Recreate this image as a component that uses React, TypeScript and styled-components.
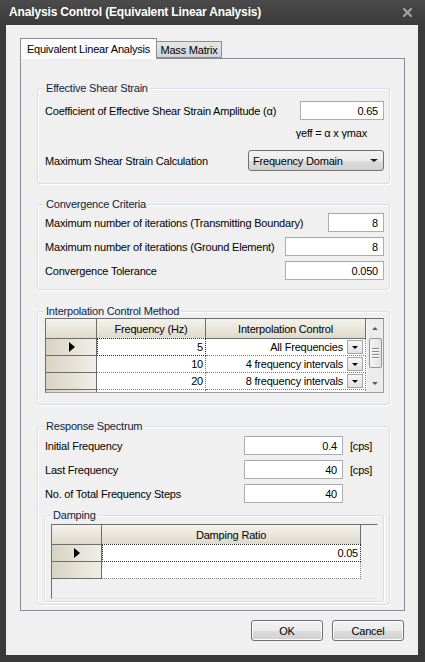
import React from "react";
import styled, { createGlobalStyle, css } from "styled-components";

const GlobalStyle = createGlobalStyle`
  html, body {
    margin: 0;
    padding: 0;
    background: #3b3b3b;
  }
  body {
    font-family: "Liberation Sans", Arial, sans-serif;
    font-size: 11px;
    letter-spacing: -0.2px;
    color: #000;
  }
  * {
    box-sizing: border-box;
  }
`;

const Window = styled.div`
  width: 425px;
  height: 662px;
  display: flex;
  flex-direction: column;
  padding: 0 7px 7px 6px;
  background: linear-gradient(#4b4b4b, #3a3a3a 26px, #3a3a3a);
`;

const TitleBar = styled.div`
  height: 25px;
  flex: none;
  display: flex;
  align-items: center;
  justify-content: space-between;
  padding: 0 6px 1px 3px;
  color: #fff;
  font-weight: bold;
  font-size: 12px;
  letter-spacing: -0.15px;
`;

const Client = styled.div`
  flex: 1;
  display: flex;
  flex-direction: column;
  background: #f0f0f0;
  padding: 13px 13px 0 14px;
`;

const TabStrip = styled.div`
  height: 21px;
  display: flex;
  align-items: flex-end;
  margin-bottom: -1px;
  position: relative;
  z-index: 1;
`;

const Tab = styled.div<{ $active?: boolean }>`
  display: flex;
  align-items: center;
  justify-content: center;
  border: 1px solid #898c95;
  border-bottom: none;
  ${(p) =>
    p.$active
      ? css`
          width: 137px;
          height: 21px;
          background: #fcfcfc;
          padding-bottom: 1px;
        `
      : css`
          width: 66px;
          height: 17px;
          margin-left: -1px;
          margin-bottom: 1px;
          background: linear-gradient(#e6e6e6, #d4d4d4);
          border-bottom: 1px solid #898c95;
        `}
`;

const Panel = styled.div`
  height: 553px;
  border: 1px solid #898c95;
  background: #f0f0f0;
  padding: 29px 14px 0 16px;
  display: flex;
  flex-direction: column;
`;

const Group = styled.div<{ $mt?: number }>`
  position: relative;
  border: 1px solid #d5dfe5;
  border-radius: 3px;
  box-shadow: inset 1px 1px 0 #fff, 1px 1px 0 #fff;
  margin-top: ${(p) => p.$mt ?? 0}px;
  padding: 0 5px 0 7px;
`;

const Legend = styled.span`
  position: absolute;
  top: -7px;
  left: 6px;
  padding: 0 2px;
  line-height: 13px;
  background: #f0f0f0;
  color: #10233f;
`;

const Row = styled.div<{ $h?: number; $mt?: number }>`
  display: flex;
  align-items: center;
  justify-content: space-between;
  height: ${(p) => p.$h ?? 19}px;
  margin-top: ${(p) => p.$mt ?? 0}px;
`;

const Label = styled.span`
  white-space: nowrap;
`;

const Field = styled.div<{ $w: number }>`
  width: ${(p) => p.$w}px;
  height: 19px;
  background: #fff;
  border: 1px solid #abadb3;
  border-top-color: #a3a6ae;
  display: flex;
  align-items: center;
  justify-content: flex-end;
  padding-right: 5px;
`;

const Formula = styled.div`
  height: 15px;
  margin-top: 5px;
  padding-right: 17px;
  display: flex;
  align-items: center;
  justify-content: flex-end;
`;

const Combo = styled.div`
  width: 136px;
  height: 21px;
  border: 1px solid #707070;
  border-radius: 3px;
  background: linear-gradient(#f2f2f2 0%, #ebebeb 50%, #dddddd 50%, #cfcfcf 100%);
  display: flex;
  align-items: center;
  justify-content: space-between;
  padding: 0 5px 0 4px;
`;

const Arrow = styled.span<{ $size?: number; $color?: string }>`
  width: 0;
  height: 0;
  border-left: ${(p) => p.$size ?? 4}px solid transparent;
  border-right: ${(p) => p.$size ?? 4}px solid transparent;
  border-top: ${(p) => (p.$size ?? 4) - 0.5}px solid ${(p) => p.$color ?? "#1b1b1b"};
`;

const UpArrow = styled.span`
  width: 0;
  height: 0;
  border-left: 3.5px solid transparent;
  border-right: 3.5px solid transparent;
  border-bottom: 3.5px solid #5c5c5c;
`;

const InputWithUnit = styled.div`
  display: flex;
  align-items: center;
`;

const Unit = styled.span`
  width: 41px;
  padding-left: 7px;
`;

/* data grids */

const GridFrame = styled.div<{ $w: number; $open?: boolean }>`
  width: ${(p) => p.$w}px;
  height: 75px;
  border: 1px solid #9c9c9c;
  border-top-color: #6d6d6d;
  border-left-color: #6d6d6d;
  ${(p) =>
    p.$open &&
    css`
      border-right-color: #f0f0f0;
      border-bottom-color: #e3e3e3;
    `}
  background: #f0f0f0;
  display: flex;
  overflow: hidden;
`;

const GridBody = styled.div`
  flex: 1;
  display: flex;
  flex-direction: column;
`;

const GridRow = styled.div<{ $header?: boolean }>`
  display: flex;
  flex: none;
  height: ${(p) => (p.$header ? 20 : 17)}px;
`;

const RowHead = styled.div<{ $w: number; $corner?: boolean }>`
  width: ${(p) => p.$w}px;
  flex: none;
  background: ${(p) =>
    p.$corner
      ? "linear-gradient(#f3f2ec, #dedacb)"
      : "linear-gradient(to right, #d7d3c3, #f0eee7)"};
  border-right: 1px solid #6d6d6d;
  border-bottom: 1px solid #6d6d6d;
  display: flex;
  align-items: center;
  justify-content: center;
`;

const ColHead = styled.div<{ $w: number }>`
  width: ${(p) => p.$w}px;
  flex: none;
  background: linear-gradient(#f3f2ec, #dedacb);
  border-right: 1px solid #6d6d6d;
  border-bottom: 1px solid #6d6d6d;
  display: flex;
  align-items: center;
  justify-content: center;
  padding-top: 1px;
`;

const Marker = styled.span`
  width: 0;
  height: 0;
  border-top: 5px solid transparent;
  border-bottom: 5px solid transparent;
  border-left: 6px solid #000;
  margin-left: 1px;
`;

const Cell = styled.div<{ $w: number; $current?: boolean }>`
  width: ${(p) => p.$w}px;
  flex: none;
  background: #fff;
  border-right: 1px dotted #7a7a7a;
  border-bottom: 1px dotted #7a7a7a;
  display: flex;
  align-items: center;
  justify-content: flex-end;
  padding-right: 2px;
  gap: 4px;
  ${(p) =>
    p.$current &&
    css`
      outline: 1px dotted #2a2a2a;
      outline-offset: -1px;
      border-top: 1px dotted #2a2a2a;
      margin-top: -1px;
      height: 18px;
    `}
`;

const CellButton = styled.span`
  width: 16px;
  height: 14px;
  flex: none;
  border: 1px solid #a7a7a7;
  background: linear-gradient(#f7f7f7, #e1e1e1);
  display: flex;
  align-items: center;
  justify-content: center;
  padding-top: 1px;
`;

const SmallArrow = styled.span`
  width: 0;
  height: 0;
  border-left: 3px solid transparent;
  border-right: 3px solid transparent;
  border-top: 3px solid #000;
`;

const ScrollBar = styled.div`
  width: 17px;
  flex: none;
  display: flex;
  flex-direction: column;
  background: #ececec;
  border-left: 1px solid #f8f8f8;
`;

const ScrollBtn = styled.div<{ $h?: number }>`
  height: ${(p) => p.$h ?? 17}px;
  flex: none;
  display: flex;
  align-items: center;
  justify-content: center;
`;

const Thumb = styled.div`
  height: 30px;
  margin: 1px 1px 0 2px;
  border: 1px solid #979797;
  border-radius: 2px;
  background: linear-gradient(to right, #f3f3f3, #e2e2e2);
  display: flex;
  flex-direction: column;
  align-items: center;
  justify-content: center;
  gap: 2px;
`;

const Grip = styled.span`
  width: 7px;
  height: 1px;
  background: #8a8a8a;
  box-shadow: 0 1px 0 #fff;
`;

const ScrollTrack = styled.div`
  flex: 1;
`;

const ButtonRow = styled.div`
  display: flex;
  justify-content: flex-end;
  gap: 9px;
  margin-top: 9px;
  padding-right: 1px;
`;

const Button = styled.div`
  width: 72px;
  height: 21px;
  border: 1px solid #707070;
  border-radius: 3px;
  background: linear-gradient(#f2f2f2 0%, #ebebeb 50%, #dddddd 50%, #cfcfcf 100%);
  box-shadow: inset 0 0 0 1px #fcfcfc;
  display: flex;
  align-items: center;
  justify-content: center;
`;

function CloseIcon() {
  return (
    <svg width="9" height="9" viewBox="0 0 9 9">
      <path d="M1 1 L8 8 M8 1 L1 8" stroke="#a3a3a3" strokeWidth="2.2" strokeLinecap="square" />
    </svg>
  );
}

const interpRows = [
  { f: "5", m: "All Frequencies" },
  { f: "10", m: "4 frequency intervals" },
  { f: "20", m: "8 frequency intervals" },
];

function InterpolationGrid() {
  return (
    <GridFrame $w={339}>
      <GridBody>
        <GridRow $header>
          <RowHead $w={51} $corner />
          <ColHead $w={109}>Frequency (Hz)</ColHead>
          <ColHead $w={160}>Interpolation Control</ColHead>
        </GridRow>
        {interpRows.map((r, i) => (
          <GridRow key={r.f}>
            <RowHead $w={51}>{i === 0 && <Marker />}</RowHead>
            <Cell $w={109} $current={i === 0}>
              {r.f}
            </Cell>
            <Cell $w={160}>
              {r.m}
              <CellButton>
                <SmallArrow />
              </CellButton>
            </Cell>
          </GridRow>
        ))}
        {/* next row, only its top edge shows */}
        <GridRow>
          <RowHead $w={51} />
          <Cell $w={109} />
          <Cell $w={160} />
        </GridRow>
      </GridBody>
      <ScrollBar>
        <ScrollBtn $h={18}>
          <UpArrow />
        </ScrollBtn>
        <Thumb>
          <Grip />
          <Grip />
          <Grip />
          <Grip />
        </Thumb>
        <ScrollTrack />
        <ScrollBtn>
          <Arrow $size={3.5} $color="#5c5c5c" />
        </ScrollBtn>
      </ScrollBar>
    </GridFrame>
  );
}

function DampingGrid() {
  return (
    <GridFrame $w={327} $open>
      <GridBody>
        <GridRow $header>
          <RowHead $w={50} $corner />
          <ColHead $w={259}>Damping Ratio</ColHead>
        </GridRow>
        <GridRow>
          <RowHead $w={50}>
            <Marker />
          </RowHead>
          <Cell $w={259} $current>
            0.05
          </Cell>
        </GridRow>
        <GridRow>
          <RowHead $w={50} />
          <Cell $w={259} />
        </GridRow>
      </GridBody>
    </GridFrame>
  );
}

export default function App() {
  return (
    <>
      <GlobalStyle />
      <Window>
        <TitleBar>
          <span>Analysis Control (Equivalent Linear Analysis)</span>
          <CloseIcon />
        </TitleBar>
        <Client>
          <TabStrip>
            <Tab $active>Equivalent Linear Analysis</Tab>
            <Tab>Mass Matrix</Tab>
          </TabStrip>
          <Panel>
            <Group style={{ paddingTop: 12, paddingBottom: 12 }}>
              <Legend>Effective Shear Strain</Legend>
              <Row>
                <Label>Coefficient of Effective Shear Strain Amplitude (α)</Label>
                <Field $w={84}>0.65</Field>
              </Row>
              <Formula>γeff = α x γmax</Formula>
              <Row $h={21} $mt={10}>
                <Label>Maximum Shear Strain Calculation</Label>
                <Combo>
                  <span>Frequency Domain</span>
                  <Arrow />
                </Combo>
              </Row>
            </Group>

            <Group $mt={20} style={{ paddingTop: 8, paddingBottom: 9 }}>
              <Legend>Convergence Criteria</Legend>
              <Row>
                <Label>Maximum number of iterations (Transmitting Boundary)</Label>
                <Field $w={56}>8</Field>
              </Row>
              <Row $mt={5}>
                <Label>Maximum number of iterations (Ground Element)</Label>
                <Field $w={99}>8</Field>
              </Row>
              <Row $mt={5}>
                <Label>Convergence Tolerance</Label>
                <Field $w={99}>0.050</Field>
              </Row>
            </Group>

            <Group $mt={21} style={{ paddingTop: 6, paddingBottom: 11 }}>
              <Legend>Interpolation Control Method</Legend>
              <InterpolationGrid />
            </Group>

            <Group $mt={21} style={{ paddingTop: 9, paddingBottom: 2 }}>
              <Legend>Response Spectrum</Legend>
              <Row>
                <Label>Initial Frequency</Label>
                <InputWithUnit>
                  <Field $w={99}>0.4</Field>
                  <Unit>[cps]</Unit>
                </InputWithUnit>
              </Row>
              <Row $mt={5}>
                <Label>Last Frequency</Label>
                <InputWithUnit>
                  <Field $w={99}>40</Field>
                  <Unit>[cps]</Unit>
                </InputWithUnit>
              </Row>
              <Row $mt={5}>
                <Label>No. of Total Frequency Steps</Label>
                <InputWithUnit>
                  <Field $w={99}>40</Field>
                  <Unit />
                </InputWithUnit>
              </Row>
              <Group $mt={12} style={{ marginLeft: -1, padding: "8px 5px 2px 6px" }}>
                <Legend>Damping</Legend>
                <DampingGrid />
              </Group>
            </Group>
          </Panel>
          <ButtonRow>
            <Button>OK</Button>
            <Button>Cancel</Button>
          </ButtonRow>
        </Client>
      </Window>
    </>
  );
}
